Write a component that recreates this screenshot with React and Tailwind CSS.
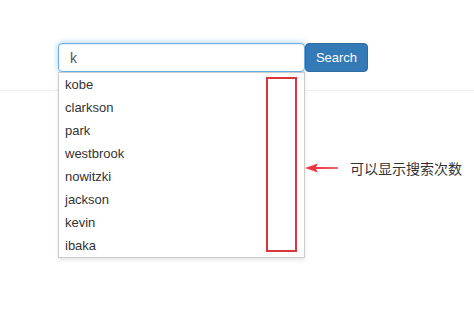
const names = [
  "kobe",
  "clarkson",
  "park",
  "westbrook",
  "nowitzki",
  "jackson",
  "kevin",
  "ibaka",
];

export default function App() {
  return (
    <div
      className="relative w-[474px] h-[326px] bg-white overflow-hidden text-[#333]"
      style={{ fontFamily: '"Liberation Sans", Arial, sans-serif' }}
    >
      <div className="h-[91px] border-b border-[#eee] pt-[43px] pl-[58px]">
        <div className="relative flex">
          <input
            readOnly
            value="k"
            className="w-[247px] h-[29px] px-[11px] text-[14px] text-[#555] bg-white border border-[#66afe9] rounded-[4px] outline-none shadow-[inset_0_1px_1px_rgba(0,0,0,0.075),0_0_6px_rgba(102,175,233,0.6)]"
          />
          <button className="w-[63px] h-[29px] text-[13px] text-white bg-[#337ab7] border border-[#2e6da4] rounded-[4px]">
            Search
          </button>

          {/* suggestion menu */}
          <ul className="absolute left-0 top-[29px] w-[247px] bg-white border border-[#ccc] shadow-[0_2px_4px_rgba(0,0,0,0.1)]">
            {names.map((n) => (
              <li key={n} className="h-[23px] leading-[23px] pl-[6px] text-[13px] text-[#333]">
                {n}
              </li>
            ))}
            {/* annotation: red box over the count column */}
            <div className="absolute left-[207px] top-[4px] w-[31px] h-[175px] border-2 border-[#d9363e]" />
          </ul>
        </div>
      </div>

      {/* annotation: arrow + note */}
      <div className="absolute left-[305px] top-[160px] flex items-center whitespace-nowrap">
        <svg width="34" height="16" viewBox="0 0 34 16">
          <path d="M0 8 L13 3.5 L11 7 L33 7.2 L33 8.8 L11 9 L13 12.5 Z" fill="#e8383d" />
        </svg>
        <span
          className="ml-[11px] text-[14px] leading-[16px] text-[#333]"
          style={{ fontFamily: '"Noto Sans CJK SC", "Liberation Sans", sans-serif' }}
        >
          可以显示搜索次数
        </span>
      </div>
    </div>
  );
}
